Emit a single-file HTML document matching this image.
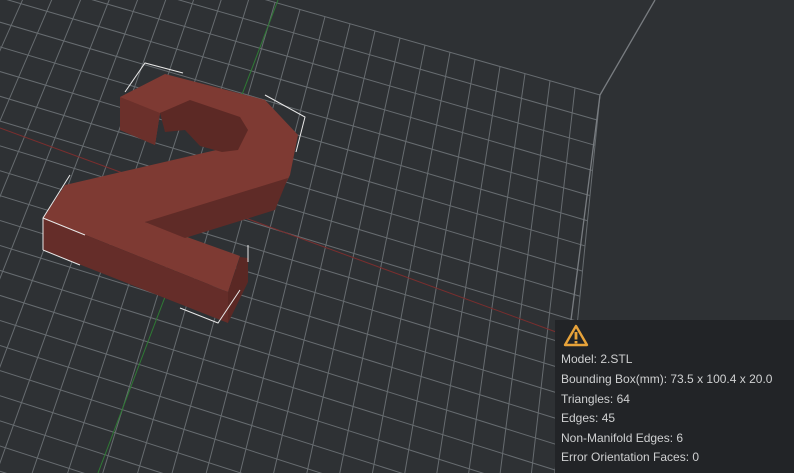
<!DOCTYPE html>
<html><head><meta charset="utf-8"><style>
html,body{margin:0;padding:0;background:#2e3134;width:794px;height:473px;overflow:hidden;font-family:"Liberation Sans",sans-serif}
#v{position:absolute;left:0;top:0;overflow:hidden}
.panel{position:absolute;left:555px;top:320px;width:239px;height:153px;background:#222427;color:#cfd0d1;font-size:12px;overflow:hidden}
.panel div{position:absolute;left:6px;white-space:nowrap;line-height:14px}
</style></head><body>
<svg id="v" width="794" height="473" viewBox="0 0 794 473">
<g id="grid" stroke="#676c70" stroke-width="1" fill="none"></g>
<line x1="0" y1="128" x2="556" y2="332" stroke="#7a2e2e" stroke-width="1"/>
<line x1="278" y1="0" x2="98" y2="473" stroke="#2f7a35" stroke-width="1"/>
<polyline points="655,0 600,95 571,320 555,473" stroke="#787c80" stroke-width="1.3" fill="none"/>
<g stroke="none">
<polygon points="120,97 165,74 265,100 298,135 290,175 275,205 145,222 240,256 228,292 43,218 65,185 225,148 245,130 235,118 185,104 160,113 155,145 120,130" fill="#7e3a33"/>
<polygon points="120,97 160,113 155,145 120,130" fill="#6b302b"/>
<polygon points="160,113 190,100 240,117 248,130 238,150 222,152 200,146 185,130 165,132" fill="#5c2925"/>
<polygon points="145,222 288,178 275,210 185,238" fill="#5f2b27"/>
<polygon points="43,218 228,292 228,323 43,250" fill="#652d29"/>
<polygon points="228,292 240,257 248,258 248,282 228,323" fill="#5a2824"/>
</g>
<g stroke="#e8e8e8" stroke-width="1" fill="none">
<polyline points="125,92 145,63 183,73"/><polyline points="265,95 305,117 296,152"/>
<polyline points="70,175 43,218 43,250"/><polyline points="43,250 80,265"/>
<polyline points="180,308 218,323 240,290"/><polyline points="248,245 248,262"/>
<polyline points="43,218 85,235"/>
</g>
</svg>
<div class="panel">
<svg style="position:absolute;left:8px;top:4px" width="26" height="24" viewBox="0 0 26 24"><path d="M13 2 L24 21 L2 21 Z" fill="none" stroke="#e8a33a" stroke-width="2.4" stroke-linejoin="round"/><rect x="11.6" y="8" width="2.8" height="7.5" fill="#e8a33a"/><rect x="11.6" y="17" width="2.8" height="2.4" fill="#e8a33a"/></svg>
<div style="top:32px">Model: 2.STL</div>
<div style="top:52px">Bounding Box(mm): 73.5 x 100.4 x 20.0</div>
<div style="top:72px">Triangles: 64</div>
<div style="top:91px">Edges: 45</div>
<div style="top:111px">Non-Manifold Edges: 6</div>
<div style="top:130px">Error Orientation Faces: 0</div>
</div>
<script>
(function(){
var P=[[600,95],[-400,-190],[-900,420],[520,900]];
function H(u,v){
 var x=(1-u)*(1-v)*P[0][0]+u*(1-v)*P[1][0]+u*v*P[2][0]+(1-u)*v*P[3][0];
 var y=(1-u)*(1-v)*P[0][1]+u*(1-v)*P[1][1]+u*v*P[2][1]+(1-u)*v*P[3][1];
 return [x,y];}
var g=document.getElementById('grid'),s='',N=40,M=32;
for(var i=0;i<=N;i++){var u=i/N,a=H(u,0),b=H(u,1);s+='<line x1="'+a[0]+'" y1="'+a[1]+'" x2="'+b[0]+'" y2="'+b[1]+'"/>';}
for(var j=0;j<=M;j++){var v=j/M,a=H(0,v),b=H(1,v);s+='<line x1="'+a[0]+'" y1="'+a[1]+'" x2="'+b[0]+'" y2="'+b[1]+'"/>';}
g.innerHTML=s;
})();
</script>
</body></html>
